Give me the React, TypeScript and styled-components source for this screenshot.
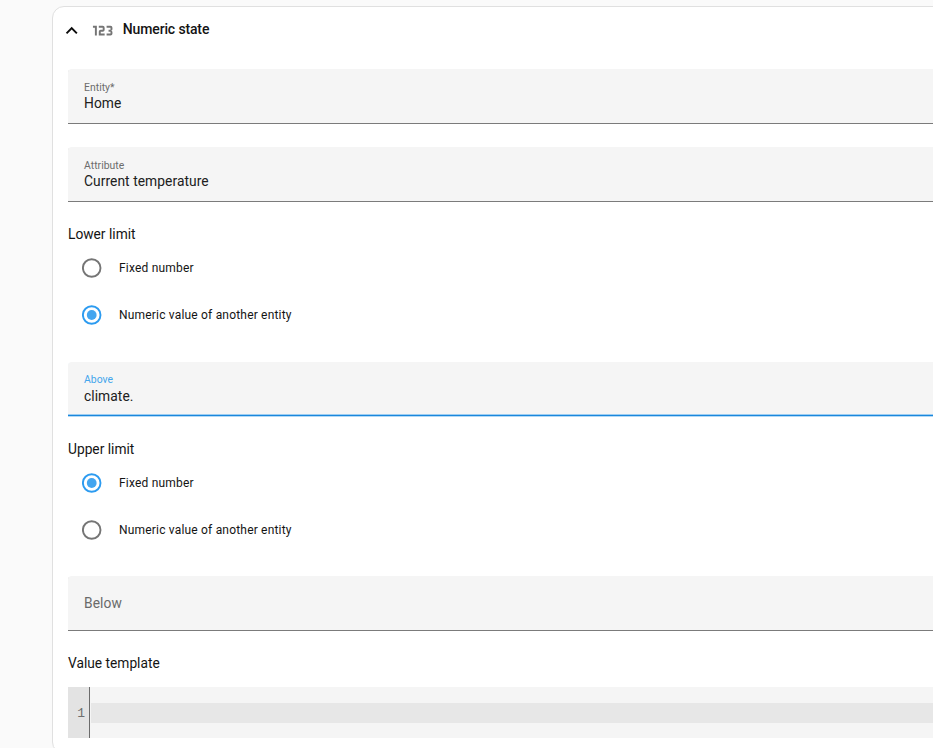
import React, { useState } from "react";
import styled, { createGlobalStyle } from "styled-components";

const GlobalStyle = createGlobalStyle`
  *, *::before, *::after { box-sizing: border-box; }
  html, body { margin: 0; height: 748px; overflow: hidden; background: #fafafa; }
  body { font-family: Roboto, sans-serif; font-size: 14px; color: #141414; }
`;

const Page = styled.main`
  height: 748px;
  overflow: hidden;
  padding: 6px 0 0 52px;
`;

const Card = styled.section`
  width: 920px;
  height: 748px;
  padding: 0 15px;
  background: #fff;
  border: 1px solid #e0e0e0;
  border-radius: 12px;
`;

const Header = styled.header`
  display: flex;
  align-items: center;
  height: 46px;
  margin: 0 0 16px -8px;
`;

const HeaderIcon = styled.svg<{ $tone: string }>`
  flex: none;
  width: 23.4px;
  height: 23.4px;
  fill: ${(p) => p.$tone};
  margin: 1px 8px 0 0;
`;

const Title = styled.h3`
  margin: 0;
  padding-bottom: 2px;
  font-size: 14px;
  line-height: 20px;
  letter-spacing: -0.14px;
  font-weight: 500;
`;

const Field = styled.label<{ $active?: boolean }>`
  display: flex;
  flex-direction: column;
  justify-content: center;
  height: 55px;
  padding: 0 16px 1px;
  background: #f5f5f5;
  border-radius: 4px 4px 0 0;
  box-shadow: ${(p) =>
    p.$active
      ? "inset 0 -1px #b4d9f5, inset 0 -2px #1a87dc, inset 0 -3px #9ccdf2"
      : "inset 0 -1px #7b7b7b"};
`;

const FieldLabel = styled.span<{ $active?: boolean }>`
  height: 14px;
  padding-top: ${(p) => (p.$active ? 0 : 1)}px;
  font-size: 10.4px;
  line-height: 14px;
  letter-spacing: 0.03px;
  color: ${(p) => (p.$active ? "#43a5ec" : "#6c6c6c")};
`;

const FieldValue = styled.span<{ $muted?: boolean }>`
  font-size: 13.8px;
  line-height: 18px;
  letter-spacing: 0.06px;
  color: ${(p) => (p.$muted ? "#6a6a6a" : "#202020")};
`;

const GroupTitle = styled.div`
  height: 20px;
  font-size: 13.75px;
  line-height: 20px;
`;

const Stack = styled.div<{ $before: number }>`
  margin-top: ${(p) => p.$before}px;
`;

const Option = styled.label`
  display: flex;
  align-items: center;
  height: 47px;
  padding-left: 14px;
  font-size: 12px;
  letter-spacing: 0.19px;
`;

const Radio = styled.svg<{ $on: boolean }>`
  width: 20px;
  height: 20px;
  margin-right: 17px;
  color: ${(p) => (p.$on ? "#2c9bf0" : "#757575")};
`;

const Editor = styled.div`
  display: flex;
  height: 51px;
  background: #f5f5f5;
`;

const Gutter = styled.div`
  width: 22px;
  padding: 17px 4px 0 0;
  border-right: 1px solid #6b6b6b;
  background: #e3e3e3;
  color: #6e6e6e;
  font: 13px/20px "Liberation Mono", monospace;
  text-align: right;
`;

const ActiveLine = styled.div`
  flex: 1;
  height: 20px;
  margin: 16px 0 0 1px;
  background: #e7e7e7;
`;

function TextField({ label, value, active }: { label: string; value?: string; active?: boolean }) {
  return (
    <Field $active={active}>
      {value ? (
        <>
          <FieldLabel $active={active}>{label}</FieldLabel>
          <FieldValue>{value}</FieldValue>
        </>
      ) : (
        <FieldValue $muted>{label}</FieldValue>
      )}
    </Field>
  );
}

const choices = ["Fixed number", "Numeric value of another entity"];

function LimitOptions({ initial }: { initial: number }) {
  const [selected, setSelected] = useState(initial);
  return (
    <div role="radiogroup">
      {choices.map((choice, i) => (
        <Option key={choice} role="radio" aria-checked={i === selected} onClick={() => setSelected(i)}>
          <Radio $on={i === selected} viewBox="0 0 20 20">
            <circle cx="9.7" cy="10" r="8.8" fill="none" stroke="currentColor" strokeWidth="1.9" />
            {i === selected && <circle cx="9.7" cy="10" r="4.9" fill="#43a5ef" />}
          </Radio>
          {choice}
        </Option>
      ))}
    </div>
  );
}

export default function App() {
  return (
    <>
      <GlobalStyle />
      <Page>
        <Card>
          <Header>
            <HeaderIcon viewBox="0 0 24 24" $tone="#0c0c0c">
              <path d="M7.41,15.41L12,10.83L16.59,15.41L18,14L12,8L6,14L7.41,15.41Z" />
            </HeaderIcon>
            <HeaderIcon viewBox="0 0 24 24" $tone="#757575">
              <path d="M4,17V9H2V7H6V17H4M22,15C22,16.11 21.1,17 20,17H16V15H20V13H18V11H20V9H16V7H20A2,2 0 0,1 22,9V10.5A1.5,1.5 0 0,1 20.5,12A1.5,1.5 0 0,1 22,13.5V15M14,15V17H8V13C8,11.89 8.9,11 10,11H12V9H8V7H12A2,2 0 0,1 14,9V11C14,12.11 13.1,13 12,13H10V15H14Z" />
            </HeaderIcon>
            <Title>Numeric state</Title>
          </Header>
          <TextField label="Entity*" value="Home" />
          <Stack $before={23}>
            <TextField label="Attribute" value="Current temperature" />
          </Stack>
          <Stack $before={22}>
            <GroupTitle>Lower limit</GroupTitle>
            <LimitOptions initial={1} />
          </Stack>
          <Stack $before={24}>
            <TextField label="Above" value="climate." active />
          </Stack>
          <Stack $before={22}>
            <GroupTitle>Upper limit</GroupTitle>
            <LimitOptions initial={0} />
          </Stack>
          <Stack $before={23}>
            <TextField label="Below" />
          </Stack>
          <Stack $before={22}>
            <GroupTitle>Value template</GroupTitle>
          </Stack>
          <Stack $before={14}>
            <Editor>
              <Gutter>1</Gutter>
              <ActiveLine />
            </Editor>
          </Stack>
        </Card>
      </Page>
    </>
  );
}
